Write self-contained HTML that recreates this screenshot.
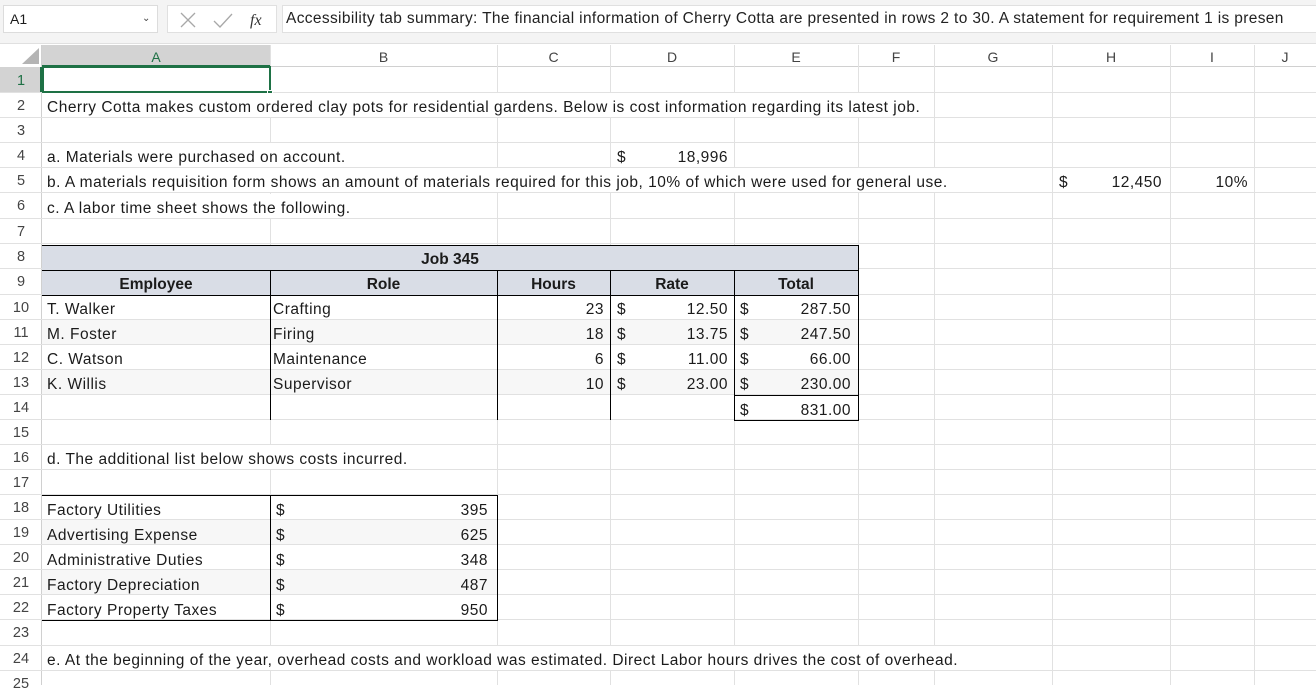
<!DOCTYPE html>
<html><head><meta charset="utf-8"><style>
*{margin:0;padding:0;box-sizing:border-box}
body{width:1316px;height:685px;overflow:hidden;background:#fff;font-family:"Liberation Sans",sans-serif;position:relative;color:#1b1b1b}
.a{position:absolute}
.c{position:absolute;height:24px;line-height:29px;white-space:nowrap;font-size:15.5px;letter-spacing:0.5px;overflow:visible}
.w{background:#fff;padding-right:2px}
.r{text-align:right}
.ce{text-align:center}
.b{font-weight:bold;letter-spacing:0}
.h{position:absolute;height:1px;background:#000}
.v{position:absolute;width:1px;background:#000}
.gh{position:absolute;height:1px;background:#e1e1e1;left:0;width:1316px}
.gv{position:absolute;width:1px;background:#e1e1e1;top:45px;height:640px}
.rn{position:absolute;left:0;width:42px;height:25px;line-height:28px;text-align:center;font-size:14.5px;color:#444}
.cn{position:absolute;top:45px;height:22px;line-height:24px;text-align:center;font-size:14px;color:#444}
</style></head><body>
<div class="a" style="left:0;top:0;width:1316px;height:44px;background:#f4f4f4;border-bottom:1px solid #e0e0e0"></div>
<div class="a" style="left:3px;top:5px;width:155px;height:28px;background:#fff;border:1px solid #dcdcdc;font-size:14px;line-height:26px;padding-left:6px">A1<span style="position:absolute;left:138px;top:0;font-size:10px;color:#444">&#8964;</span></div>
<div class="a" style="left:167px;top:5px;width:110px;height:28px;background:#fff;border:1px solid #e0e0e0"></div>
<svg class="a" style="left:178px;top:11px" width="90" height="18"><path d="M3 2L17 16M17 2L3 16" stroke="#a8a8a8" stroke-width="1.3" fill="none"/><path d="M36 10L42 16L54 3" stroke="#a8a8a8" stroke-width="1.3" fill="none"/><text x="72" y="14" font-family="Liberation Serif" font-style="italic" font-size="16" fill="#333">fx</text></svg>
<div class="a" style="left:282px;top:5px;width:1040px;height:28px;background:#fff;border:1px solid #e0e0e0;font-size:15.5px;letter-spacing:0.35px;line-height:26px;padding-left:3px;white-space:nowrap;overflow:hidden;color:#222">Accessibility tab summary: The financial information of Cherry Cotta are presented in rows 2 to 30. A statement for requirement 1 is presen</div>

<div class="a" style="left:0;top:45px;width:1316px;height:22px;background:#fff;border-bottom:1px solid #d0d0d0"></div>
<div class="a" style="left:0;top:45px;width:42px;height:640px;background:#fff;border-right:1px solid #d0d0d0"></div>
<div class="a" style="left:42px;top:45px;width:228px;height:22px;background:#d3d3d3;border-bottom:2px solid #1e7145"></div>
<div class="a" style="left:0;top:67px;width:42px;height:25px;background:#d3d3d3;border-right:2px solid #1e7145"></div>
<svg class="a" style="left:20px;top:47px" width="20" height="18"><path d="M2 17L19 17L19 1Z" fill="#b4b4b4"/></svg>

<div class="gv" style="left:270px"></div><div class="gv" style="left:497px"></div><div class="gv" style="left:610px"></div><div class="gv" style="left:734px"></div><div class="gv" style="left:858px"></div><div class="gv" style="left:934px"></div><div class="gv" style="left:1052px"></div><div class="gv" style="left:1170px"></div><div class="gv" style="left:1254px"></div>

<div class="cn" style="left:42px;width:228px;color:#1e7145">A</div>
<div class="cn" style="left:270px;width:227px">B</div>
<div class="cn" style="left:497px;width:113px">C</div>
<div class="cn" style="left:610px;width:124px">D</div>
<div class="cn" style="left:734px;width:124px">E</div>
<div class="cn" style="left:858px;width:76px">F</div>
<div class="cn" style="left:934px;width:118px">G</div>
<div class="cn" style="left:1052px;width:118px">H</div>
<div class="cn" style="left:1170px;width:84px">I</div>
<div class="cn" style="left:1254px;width:62px">J</div>

<div class="a" style="left:42px;top:320px;width:816px;height:25px;background:#f7f7f7"></div>
<div class="a" style="left:42px;top:370px;width:816px;height:25px;background:#f7f7f7"></div>
<div class="a" style="left:42px;top:520px;width:455px;height:25px;background:#f7f7f7"></div>
<div class="a" style="left:42px;top:570px;width:455px;height:25px;background:#f7f7f7"></div>

<div class="gh" style="top:92px"></div><div class="gh" style="top:117px"></div><div class="gh" style="top:142px"></div><div class="gh" style="top:167px"></div><div class="gh" style="top:192px"></div><div class="gh" style="top:218px"></div><div class="gh" style="top:243px"></div><div class="gh" style="top:268px"></div><div class="gh" style="top:294px"></div><div class="gh" style="top:319px"></div><div class="gh" style="top:344px"></div><div class="gh" style="top:369px"></div><div class="gh" style="top:394px"></div><div class="gh" style="top:419px"></div><div class="gh" style="top:444px"></div><div class="gh" style="top:469px"></div><div class="gh" style="top:494px"></div><div class="gh" style="top:519px"></div><div class="gh" style="top:544px"></div><div class="gh" style="top:569px"></div><div class="gh" style="top:594px"></div><div class="gh" style="top:619px"></div><div class="gh" style="top:645px"></div><div class="gh" style="top:670px"></div>
<div class="a" style="left:42px;top:245px;width:816px;height:50px;background:#d9dde6"></div>

<div class="rn" style="top:67px;color:#1e7145">1</div>
<div class="rn" style="top:92px">2</div><div class="rn" style="top:117px">3</div><div class="rn" style="top:142px">4</div><div class="rn" style="top:167px">5</div><div class="rn" style="top:192px">6</div><div class="rn" style="top:218px">7</div><div class="rn" style="top:243px">8</div><div class="rn" style="top:268px">9</div><div class="rn" style="top:294px">10</div><div class="rn" style="top:319px">11</div><div class="rn" style="top:344px">12</div><div class="rn" style="top:369px">13</div><div class="rn" style="top:394px">14</div><div class="rn" style="top:419px">15</div><div class="rn" style="top:444px">16</div><div class="rn" style="top:469px">17</div><div class="rn" style="top:494px">18</div><div class="rn" style="top:519px">19</div><div class="rn" style="top:544px">20</div><div class="rn" style="top:569px">21</div><div class="rn" style="top:594px">22</div><div class="rn" style="top:619px">23</div><div class="rn" style="top:645px">24</div><div class="rn" style="top:670px">25</div>

<div class="a" style="left:42px;top:66px;width:229px;height:27px;border:2px solid #1e7145"></div>
<div class="a" style="left:267px;top:90px;width:6px;height:6px;background:#1e7145;border:1px solid #fff"></div>

<div class="h" style="left:42px;top:245px;width:817px"></div>
<div class="h" style="left:42px;top:270px;width:817px"></div>
<div class="h" style="left:42px;top:295px;width:817px"></div>
<div class="v" style="left:858px;top:245px;height:175px"></div>
<div class="v" style="left:270px;top:270px;height:150px"></div>
<div class="v" style="left:497px;top:270px;height:150px"></div>
<div class="v" style="left:610px;top:270px;height:150px"></div>
<div class="v" style="left:734px;top:270px;height:150px"></div>
<div class="h" style="left:734px;top:395px;width:125px"></div>
<div class="h" style="left:734px;top:420px;width:125px"></div>

<div class="h" style="left:42px;top:495px;width:456px"></div>
<div class="h" style="left:42px;top:620px;width:456px"></div>
<div class="v" style="left:270px;top:495px;height:125px"></div>
<div class="v" style="left:497px;top:495px;height:126px"></div>

<div class="c w" style="left:47px;top:93px">Cherry Cotta makes custom ordered clay pots for residential gardens. Below is cost information regarding its latest job.</div>
<div class="c w" style="left:47px;top:143px">a. Materials were purchased on account.</div>
<div class="c" style="left:617px;top:143px">$</div>
<div class="c r" style="left:640px;top:143px;width:88px">18,996</div>
<div class="c w" style="left:47px;top:168px">b. A materials requisition form shows an amount of materials required for this job, 10% of which were used for general use.</div>
<div class="c" style="left:1059px;top:168px">$</div>
<div class="c r" style="left:1080px;top:168px;width:82px">12,450</div>
<div class="c r" style="left:1180px;top:168px;width:68px">10%</div>
<div class="c w" style="left:47px;top:194px">c. A labor time sheet shows the following.</div>

<div class="c b" style="left:400px;top:245px;width:100px;text-align:center">Job 345</div>
<div class="c b ce" style="left:42px;top:270px;width:228px">Employee</div>
<div class="c b ce" style="left:270px;top:270px;width:227px">Role</div>
<div class="c b ce" style="left:497px;top:270px;width:113px">Hours</div>
<div class="c b ce" style="left:610px;top:270px;width:124px">Rate</div>
<div class="c b ce" style="left:734px;top:270px;width:124px">Total</div>

<div class="c" style="left:47px;top:295px">T. Walker</div><div class="c" style="left:273px;top:295px">Crafting</div><div class="c r" style="left:500px;top:295px;width:104px">23</div><div class="c" style="left:617px;top:295px">$</div><div class="c r" style="left:640px;top:295px;width:88px">12.50</div><div class="c" style="left:740px;top:295px">$</div><div class="c r" style="left:760px;top:295px;width:91px">287.50</div>
<div class="c" style="left:47px;top:320px">M. Foster</div><div class="c" style="left:273px;top:320px">Firing</div><div class="c r" style="left:500px;top:320px;width:104px">18</div><div class="c" style="left:617px;top:320px">$</div><div class="c r" style="left:640px;top:320px;width:88px">13.75</div><div class="c" style="left:740px;top:320px">$</div><div class="c r" style="left:760px;top:320px;width:91px">247.50</div>
<div class="c" style="left:47px;top:345px">C. Watson</div><div class="c" style="left:273px;top:345px">Maintenance</div><div class="c r" style="left:500px;top:345px;width:104px">6</div><div class="c" style="left:617px;top:345px">$</div><div class="c r" style="left:640px;top:345px;width:88px">11.00</div><div class="c" style="left:740px;top:345px">$</div><div class="c r" style="left:760px;top:345px;width:91px">66.00</div>
<div class="c" style="left:47px;top:370px">K. Willis</div><div class="c" style="left:273px;top:370px">Supervisor</div><div class="c r" style="left:500px;top:370px;width:104px">10</div><div class="c" style="left:617px;top:370px">$</div><div class="c r" style="left:640px;top:370px;width:88px">23.00</div><div class="c" style="left:740px;top:370px">$</div><div class="c r" style="left:760px;top:370px;width:91px">230.00</div>
<div class="c" style="left:740px;top:396px">$</div><div class="c r" style="left:760px;top:396px;width:91px">831.00</div>

<div class="c w" style="left:47px;top:445px">d. The additional list below shows costs incurred.</div>

<div class="c" style="left:47px;top:496px">Factory Utilities</div><div class="c" style="left:276px;top:496px">$</div><div class="c r" style="left:400px;top:496px;width:88px">395</div>
<div class="c" style="left:47px;top:521px">Advertising Expense</div><div class="c" style="left:276px;top:521px">$</div><div class="c r" style="left:400px;top:521px;width:88px">625</div>
<div class="c" style="left:47px;top:546px">Administrative Duties</div><div class="c" style="left:276px;top:546px">$</div><div class="c r" style="left:400px;top:546px;width:88px">348</div>
<div class="c" style="left:47px;top:571px">Factory Depreciation</div><div class="c" style="left:276px;top:571px">$</div><div class="c r" style="left:400px;top:571px;width:88px">487</div>
<div class="c" style="left:47px;top:596px">Factory Property Taxes</div><div class="c" style="left:276px;top:596px">$</div><div class="c r" style="left:400px;top:596px;width:88px">950</div>

<div class="c w" style="left:47px;top:646px">e. At the beginning of the year, overhead costs and workload was estimated. Direct Labor hours drives the cost of overhead.</div>
</body></html>
